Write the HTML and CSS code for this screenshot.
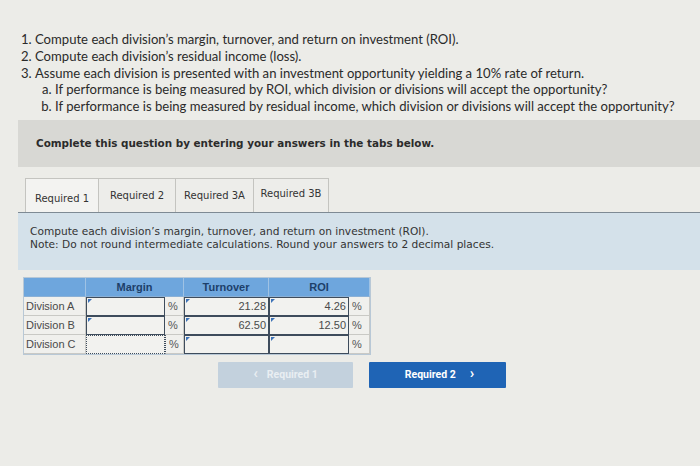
FILE: index.html
```html
<!DOCTYPE html>
<html>
<head>
<meta charset="utf-8">
<link rel="stylesheet" href="styles.css">
</head>
<body>
<div class="page">
  <ol class="steps">
    <li>Compute each division’s margin, turnover, and return on investment (ROI).</li>
    <li>Compute each division’s residual income (loss).</li>
    <li>Assume each division is presented with an investment opportunity yielding a 10% rate of return.
      <ol class="sub">
        <li>If performance is being measured by ROI, which division or divisions will accept the opportunity?</li>
        <li>If performance is being measured by residual income, which division or divisions will accept the opportunity?</li>
      </ol>
    </li>
  </ol>

  <div class="banner">Complete this question by entering your answers in the tabs below.</div>

  <div class="tabs">
    <div class="tab active">Required 1</div>
    <div class="tab">Required 2</div>
    <div class="tab">Required 3A</div>
    <div class="tab">Required 3B</div>
  </div>

  <div class="panel">
    <p>Compute each division’s margin, turnover, and return on investment (ROI).</p>
    <p>Note: Do not round intermediate calculations. Round your answers to 2 decimal places.</p>
  </div>

  <div class="grid">
    <div class="hd"></div>
    <div class="hd span2">Margin</div>
    <div class="hd">Turnover</div>
    <div class="hd span2">ROI</div>

    <div class="lbl">Division A</div>
    <div class="cell"><div class="inp"></div></div>
    <div class="pct">%</div>
    <div class="cell"><div class="inp">21.28</div></div>
    <div class="cell"><div class="inp">4.26</div></div>
    <div class="pct">%</div>

    <div class="lbl">Division B</div>
    <div class="cell"><div class="inp"></div></div>
    <div class="pct">%</div>
    <div class="cell"><div class="inp">62.50</div></div>
    <div class="cell"><div class="inp">12.50</div></div>
    <div class="pct">%</div>

    <div class="lbl">Division C</div>
    <div class="cell"><div class="inp dotted"></div></div>
    <div class="pct dotl">%</div>
    <div class="cell"><div class="inp"></div></div>
    <div class="cell"><div class="inp"></div></div>
    <div class="pct">%</div>
  </div>

  <div class="nav">
    <div class="btn prev"><span class="chev">&#8249;</span> Required 1</div>
    <div class="btn next">Required 2 <span class="chev">&#8250;</span></div>
  </div>
</div>
</body>
</html>
```

FILE: styles.css
```css
html, body {
  margin: 0;
  padding: 0;
}
body {
  background: #ecece8;
  width: 700px;
  height: 466px;
  overflow: hidden;
}
.page {
  padding-top: 31px;
  padding-left: 18px;
}
.steps {
  margin: 0;
  padding-left: 17px;
  font-family: Lato, "Liberation Sans", sans-serif;
  font-size: 13.1px;
  line-height: 16.8px;
  color: #2a2a2a;
}
.steps .sub {
  list-style: lower-alpha;
  margin: 0;
  padding-left: 20px;
}
.banner {
  margin-top: 5px;
  height: 47px;
  background: #d8d8d4;
  display: flex;
  align-items: center;
  padding-left: 18px;
  font-family: "DejaVu Sans", Verdana, sans-serif;
  font-weight: bold;
  font-size: 10.4px;
  color: #2b2b2b;
}
.tabs {
  display: flex;
  margin-top: 11px;
  margin-left: 7px;
  height: 34px;
}
.tab {
  box-sizing: border-box;
  border: 1px solid #c4c4c0;
  border-bottom: none;
  background: #ededea;
  display: flex;
  align-items: center;
  justify-content: center;
  white-space: nowrap;
  font-family: "DejaVu Sans", Verdana, sans-serif;
  font-size: 10px;
  color: #333;
  margin-right: -1px;
}
.tab.active {
  background: #f3f3f1;
  padding-top: 6px;
  width: 74px;
}
.tab:nth-child(2) { width: 78px; }
.tab:nth-child(3) { width: 79px; }
.tab:nth-child(4) { width: 76px; padding-bottom: 4px; }
.panel {
  height: 58px;
  box-sizing: border-box;
  background: #d4e1ea;
  border-top: 1px solid #7e8a94;
  padding: 12px 0 0 12px;
  font-family: "DejaVu Sans", Verdana, sans-serif;
  font-size: 10.6px;
  line-height: 13px;
  color: #333;
}
.panel p { margin: 0; }
.grid {
  margin-top: 7px;
  margin-left: 5px;
  display: grid;
  grid-template-columns: 62px 79px 19px 85px 80px 21px;
  grid-auto-rows: 19px;
  width: 346px;
  border: 1px solid #b8c8d6;
  background: #f0f0ed;
  font-family: "Liberation Sans", Arial, sans-serif;
  font-size: 11px;
}
.hd {
  background: #6ea6dd;
  color: #1d3f6a;
  font-weight: bold;
  display: flex;
  align-items: center;
  justify-content: center;
  border-right: 1px solid #9fc2e4;
  border-bottom: 1px solid #8ab0d6;
}
.span2 { grid-column: span 2; }
.lbl {
  display: flex;
  align-items: center;
  padding-left: 2px;
  color: #4a4a4a;
  border-bottom: 1px solid #c9c9c5;
  border-right: 1px solid #c9c9c5;
}
.cell {
  position: relative;
  display: flex;
}
.inp {
  flex: 1;
  box-sizing: border-box;
  border: 1.5px solid #3e4c5c;
  background: #f2f2ef;
  display: flex;
  align-items: center;
  justify-content: flex-end;
  padding-right: 2px;
  color: #4a4a4a;
  position: relative;
}
.inp::before {
  content: "";
  position: absolute;
  left: 1px;
  top: 1px;
  border-top: 4px solid #3c72b8;
  border-right: 4px solid transparent;
}
.inp.dotted {
  border: 1.5px dotted #3e4c5c;
}
.inp.dotted::before { display: none; }
.pct {
  display: flex;
  align-items: center;
  padding-left: 3px;
  color: #555;
  border-bottom: 1px solid #c9c9c5;
  border-right: 1px solid #c9c9c5;
}
.dotl { border-left: 1.5px dotted #3e4c5c; }
.nav {
  display: flex;
  gap: 16px;
  margin-top: 7px;
  margin-left: 200px;
}
.btn {
  box-sizing: border-box;
  width: 135px;
  height: 26px;
  display: flex;
  align-items: center;
  justify-content: center;
  gap: 9px;
  font-family: Roboto, "Liberation Sans", sans-serif;
  font-weight: bold;
  font-size: 10.5px;
  border-radius: 1px;
}
.btn.prev {
  background: #c3d1dd;
  color: #e9eef2;
}
.btn.next {
  background: #1f64b5;
  color: #ffffff;
  width: 137px;
  gap: 14px;
  padding-left: 4px;
}
.chev { font-weight: bold; font-size: 15px; line-height: 1; margin-top: -2px; }
```
